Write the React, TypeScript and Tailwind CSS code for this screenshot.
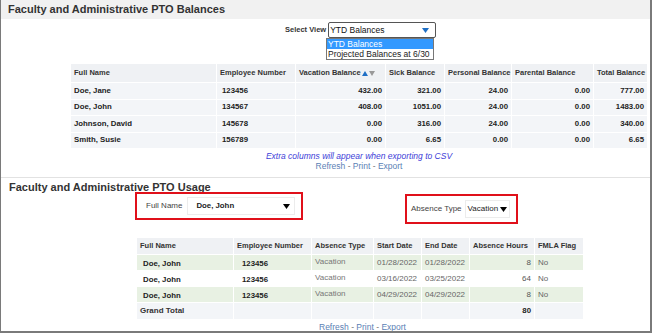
import React from 'react';

const font = { fontFamily: '"Liberation Sans", Arial, sans-serif' };

type BalanceRow = {
  name: string;
  num: string;
  vac: string;
  sick: string;
  personal: string;
  parental: string;
  total: string;
};

const balances: BalanceRow[] = [
  { name: 'Doe, Jane', num: '123456', vac: '432.00', sick: '321.00', personal: '24.00', parental: '0.00', total: '777.00' },
  { name: 'Doe, John', num: '134567', vac: '408.00', sick: '1051.00', personal: '24.00', parental: '0.00', total: '1483.00' },
  { name: 'Johnson, David', num: '145678', vac: '0.00', sick: '316.00', personal: '24.00', parental: '0.00', total: '340.00' },
  { name: 'Smith, Susie', num: '156789', vac: '0.00', sick: '6.65', personal: '0.00', parental: '0.00', total: '6.65' },
];

const usage = [
  { start: '01/28/2022', end: '01/28/2022', hours: '8', green: true },
  { start: '03/16/2022', end: '03/25/2022', hours: '64', green: false },
  { start: '04/29/2022', end: '04/29/2022', hours: '8', green: true },
];

function Links() {
  return (
    <div className="text-[8.5px] leading-[10px] text-[#5b7fb5]">
      Refresh <span className="text-[#777]">-</span> Print <span className="text-[#777]">-</span> Export
    </div>
  );
}

function Caret({ className = '' }: { className?: string }) {
  return (
    <svg width="7" height="5" viewBox="0 0 7 5" className={className}>
      <path d="M0 0h7L3.5 5z" fill="currentColor" />
    </svg>
  );
}

export default function App() {
  const th = 'border border-white bg-[#eff1f4] px-[3px] font-bold text-[#333] text-[7.5px] whitespace-nowrap';
  const td = 'border border-white bg-[#f3f5f8] px-[3px] font-bold text-[#222] text-[7.8px] whitespace-nowrap';

  return (
    <div style={font} className="relative h-[333px] w-[652px] overflow-hidden border-b-2 border-l border-r-2 border-[#7a7a7a] bg-white">
      {/* Balances section */}
      <div className="h-[19px] bg-[#f1f1f1] pl-[7px] text-[11px] font-bold leading-[19px] text-[#333]">
        Faculty and Administrative PTO Balances
      </div>

      <div className="relative mt-[3px] flex h-[16px] items-center pl-[284px]">
        <span className="mr-[2px] text-[7.5px] font-bold text-[#333]">Select View</span>
        <div className="flex h-[16px] w-[108px] items-center justify-between rounded-[2px] border border-[#555] bg-white pl-[1px] pr-[6px] text-[8.5px] text-[#111]">
          YTD Balances
          <Caret className="text-[#1f6fc5]" />
        </div>
        <div className="absolute left-[325px] top-[16px] z-10 w-[108px] whitespace-nowrap border border-[#777] bg-white text-[8.5px] leading-[10px] text-[#222]">
          <div className="bg-[#3399ff] pl-[1px] text-white">YTD Balances</div>
          <div className="pl-[1px]">Projected Balances at 6/30</div>
        </div>
      </div>

      <div className="ml-[69px] mt-[25px] w-[578px]">
        <table className="w-full table-fixed border-collapse">
          <colgroup>
            <col className="w-[146px]" />
            <col className="w-[79px]" />
            <col className="w-[90px]" />
            <col className="w-[59px]" />
            <col className="w-[67px]" />
            <col className="w-[82px]" />
            <col />
          </colgroup>
          <thead>
            <tr className="h-[19px]">
              <th className={`${th} text-left`}>Full Name</th>
              <th className={`${th} text-left`}>Employee Number</th>
              <th className={`${th} text-left`}>
                <span className="inline-flex items-center gap-[1px]">
                  Vacation Balance
                  <svg width="13" height="5" viewBox="0 0 13 5">
                    <path d="M0 5L3 0L6 5z" fill="#1f6fc5" />
                    <path d="M7 0h6L10 5z" fill="#999" />
                  </svg>
                </span>
              </th>
              <th className={`${th} text-left`}>Sick Balance</th>
              <th className={`${th} text-left`}>Personal Balance</th>
              <th className={`${th} text-left`}>Parental Balance</th>
              <th className={`${th} text-left`}>Total Balance</th>
            </tr>
          </thead>
          <tbody>
            {balances.map((r) => (
              <tr key={r.name} className="h-[16.5px]">
                <td className={td}>{r.name}</td>
                <td className={`${td} pl-[5px]`}>{r.num}</td>
                <td className={`${td} text-right`}>{r.vac}</td>
                <td className={`${td} text-right`}>{r.sick}</td>
                <td className={`${td} text-right`}>{r.personal}</td>
                <td className={`${td} text-right`}>{r.parental}</td>
                <td className={`${td} text-right`}>{r.total}</td>
              </tr>
            ))}
          </tbody>
        </table>
        <div className="mt-[2px] text-center">
          <div className="text-[8.5px] italic leading-[10px] text-[#4040d8]">
            Extra columns will appear when exporting to CSV
          </div>
          <Links />
        </div>
      </div>

      {/* Usage section */}
      <div className="mt-[6px] border-t border-[#e2e2e2] pl-[8px] pt-[3px] text-[11px] font-bold leading-[13px] text-[#333]">
        Faculty and Administrative PTO Usage
      </div>

      <div className="flex">
        <div className="ml-[134px] mt-[-2px] flex h-[28px] w-[168px] items-center border-2 border-[#e0101a] pl-[9px]">
          <span className="mr-[5px] text-[8px] text-[#444]">Full Name</span>
          <div className="flex h-[18px] w-[108px] items-center justify-between border border-[#ececec] bg-white pl-[8px] pr-[4px] text-[7.8px] font-bold text-[#222]">
            Doe, John
            <Caret className="text-black" />
          </div>
        </div>
        <div className="ml-[102px] mt-[0px] flex h-[30px] w-[113px] items-center border-2 border-[#e0101a] pl-[4px]">
          <span className="mr-[3px] text-[8px] text-[#444]">Absence Type</span>
          <div className="flex h-[18px] items-center gap-[2px] border border-[#ececec] bg-white px-[2px] text-[8px] text-[#222]">
            Vacation
            <Caret className="text-black" />
          </div>
        </div>
      </div>

      <div className="ml-[135px] mt-[13px] w-[448px]">
        <table className="w-full table-fixed border-collapse">
          <colgroup>
            <col className="w-[97px]" />
            <col className="w-[78px]" />
            <col className="w-[62px]" />
            <col className="w-[48px]" />
            <col className="w-[48px]" />
            <col className="w-[65px]" />
            <col />
          </colgroup>
          <thead>
            <tr className="h-[17px]">
              <th className={`${th} text-left`}>Full Name</th>
              <th className={`${th} text-left`}>Employee Number</th>
              <th className={`${th} text-left`}>Absence Type</th>
              <th className={`${th} text-left`}>Start Date</th>
              <th className={`${th} text-left`}>End Date</th>
              <th className={`${th} text-left`}>Absence Hours</th>
              <th className={`${th} text-left`}>FMLA Flag</th>
            </tr>
          </thead>
          <tbody>
            {usage.map((u, i) => {
              const bg = u.green ? 'bg-[#e8f1e3]' : 'bg-white';
              const c = `border border-white ${bg} px-[3px] whitespace-nowrap`;
              return (
                <tr key={i} className="h-[16px]">
                  <td className={`${c} pl-[6px] pt-[3px] text-[7.8px] font-bold text-[#222]`}>Doe, John</td>
                  <td className={`${c} pl-[8px] pt-[3px] text-[7.8px] font-bold text-[#222]`}>123456</td>
                  <td className={`${c} pb-[2px] text-[8px] text-[#777]`}>Vacation</td>
                  <td className={`${c} text-[8px] text-[#666]`}>{u.start}</td>
                  <td className={`${c} text-[8px] text-[#666]`}>{u.end}</td>
                  <td className={`${c} text-right text-[8px] text-[#555]`}>{u.hours}</td>
                  <td className={`${c} text-[8px] text-[#666]`}>No</td>
                </tr>
              );
            })}
            <tr className="h-[17px]">
              <td className={`${td} text-[8px] text-[#333]`}>Grand Total</td>
              <td className={td}></td>
              <td className={td}></td>
              <td className={td}></td>
              <td className={td}></td>
              <td className={`${td} text-right`}>80</td>
              <td className={td}></td>
            </tr>
          </tbody>
        </table>
        <div className="mt-[2px] pl-[183px]">
          <Links />
        </div>
      </div>
    </div>
  );
}
